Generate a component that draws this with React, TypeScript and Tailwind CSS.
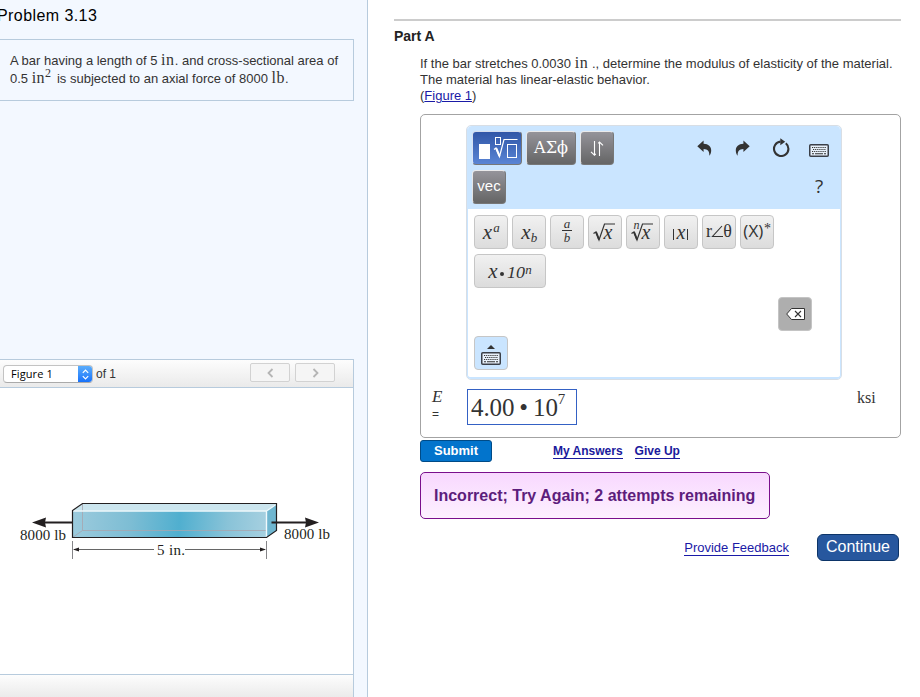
import type { ReactNode } from "react";
import clsx from "clsx";

const serif = "font-['Liberation_Serif',serif]";

// shared svg text setup for the formula keys
const keyText = {
    fontFamily: "'Liberation Serif', serif",
    fontStyle: "italic",
    fill: "#333",
    textAnchor: "middle" as const,
};

interface ButtonProps {
    children: ReactNode;
    wide?: boolean;
}

const ModeButton: React.FC<ButtonProps & { active?: boolean }> = ({ children, wide, active }) => (
    <button
        className={clsx(
            "flex h-[34px] items-center justify-center rounded-[4px] border border-t-white/80 border-r-[#777] border-b-[#777] border-l-white/80 bg-linear-to-b bg-origin-border text-white",
            wide ? "w-[50px]" : "w-[34px]",
            active ? "from-[#2f55a6] to-[#5b86d6]" : "from-[#96959c] to-[#646464]",
        )}
    >
        {children}
    </button>
);

const FormulaKey: React.FC<ButtonProps> = ({ children, wide }) => (
    <button
        className={clsx(
            "h-[34px] rounded-[4px] border border-[#c6c6c6] bg-linear-to-b from-[#f1f1f1] to-[#dcdcdc]",
            wide ? "w-[72px]" : "w-[34px]",
        )}
    >
        <svg viewBox={wide ? "1 1 70 32" : "1 1 32 32"} className="block h-8 w-full">
            {children}
        </svg>
    </button>
);

const KeyboardIcon: React.FC = () => (
    <svg width="20" height="13" viewBox="0 0 20 13" className="block">
        <rect x="0.75" y="0.75" width="18.5" height="11.5" rx="1" fill="#e8f1fb" stroke="#3a3f48" strokeWidth="1.5" />
        <path d="M3 3.5H17M4 5.5H17M3 7.5H17" stroke="#333" strokeWidth="1.1" strokeDasharray="1.2 0.9" />
        <path d="M3 9.7H5M6 9.7H14M15 9.7H17" stroke="#333" strokeWidth="1.1" />
    </svg>
);

const UndoIcon: React.FC<{ flip?: boolean }> = ({ flip }) => (
    <svg width="15" height="16" viewBox="0 0 15 16" className={clsx("block", flip && "-scale-x-100")}>
        <path d="M0.3 6.2 6.6 0.6V3.8C11.5 4 14.2 6.6 14.2 10.6 14.2 12.8 13.5 14.7 12.3 15.8 12.7 11.4 10.8 9 6.6 8.9V12Z" fill="#333" />
    </svg>
);

const Toolbar: React.FC = () => (
    <div className="flex h-[83px] justify-between rounded-t-[4px] bg-[#cae5ff] pt-[5px] pl-[4px]">
        <div className="flex flex-col gap-[5px]">
            <div className="flex gap-1">
                <ModeButton wide active>
                    <svg width="48" height="32" viewBox="0 0 48 32">
                        <rect x="6" y="12" width="11" height="15" fill="white" />
                        <path d="M21 17.5 23 16 26.5 24.5 31 7.5H44.5" fill="none" stroke="white" strokeWidth="1.2" />
                        <path d="M23.3 16.5 26.5 24" stroke="white" strokeWidth="2" />
                        <rect x="22.5" y="5.5" width="5" height="7" fill="none" stroke="white" />
                        <rect x="34.5" y="12.5" width="9" height="13" fill="none" stroke="white" />
                    </svg>
                </ModeButton>
                <ModeButton wide>
                    <svg width="48" height="32" viewBox="0 0 48 32">
                        <text x="24" y="21" textAnchor="middle" textLength="34" lengthAdjust="spacingAndGlyphs" fontSize="17" fontFamily="'DejaVu Serif', serif" fill="white">AΣϕ</text>
                    </svg>
                </ModeButton>
                <ModeButton>
                    <svg width="32" height="32" viewBox="0 0 32 32" fill="none" stroke="white" strokeWidth="1.1">
                        <path d="M13.5 9V23M10 19.8 13.5 23.2 14.8 21.8M18.5 24V10M17.2 11.4 18.5 10 22 13.4" />
                    </svg>
                </ModeButton>
            </div>
            <ModeButton>
                <span className="-mt-[3px] text-[15px]">vec</span>
            </ModeButton>
        </div>
        <div className="flex w-[143px] flex-col pt-[9px] text-[#333]">
            <div className="flex h-[21px] items-start">
                <span className="w-[38px]"><UndoIcon /></span>
                <span className="w-[37px]"><UndoIcon flip /></span>
                <svg width="18" height="19" viewBox="0 0 18 19" className="mr-[19px] -mt-0.5 block">
                    <path d="M13.8 5.2A7.2 7.2 0 1 1 8.5 3.6" fill="none" stroke="#333" strokeWidth="2.1" />
                    <path d="M8.3 0.2 13.2 3.8 8.3 7.2Z" fill="#333" />
                </svg>
                <span className="mt-[4px]"><KeyboardIcon /></span>
            </div>
            <span className="mt-[13px] ml-[118px] font-['Open_Sans',sans-serif] text-[19px] leading-6">?</span>
        </div>
    </div>
);

const FormulaKeys: React.FC = () => (
    <div className="flex flex-col gap-[5px] px-[6px] pt-[6px]">
        <div className="flex gap-1">
            <FormulaKey>
                <text {...keyText} x="13.5" y="23.5" fontSize="21">x</text>
                <text {...keyText} x="22.5" y="16.5" fontSize="13">a</text>
            </FormulaKey>
            <FormulaKey>
                <text {...keyText} x="14" y="23.5" fontSize="21">x</text>
                <text {...keyText} x="22" y="26.5" fontSize="13">b</text>
            </FormulaKey>
            <FormulaKey>
                <text {...keyText} x="17" y="13" fontSize="13">a</text>
                <path d="M12 15.5H22" stroke="#333" />
                <text {...keyText} x="17" y="27" fontSize="13">b</text>
            </FormulaKey>
            <FormulaKey>
                <path d="M5.5 18.5 8 17 11 25 16.5 9H27" fill="none" stroke="#333" strokeWidth="1.2" />
                <path d="M8 17 11 24.5" stroke="#333" strokeWidth="2" />
                <text {...keyText} x="20" y="23.5" fontSize="20">x</text>
            </FormulaKey>
            <FormulaKey>
                <path d="M5.5 18.5 8 17 11 25 16.5 9H27" fill="none" stroke="#333" strokeWidth="1.2" />
                <path d="M8 17 11 24.5" stroke="#333" strokeWidth="2" />
                <text {...keyText} x="20" y="23.5" fontSize="20">x</text>
                <text {...keyText} x="10.5" y="14" fontSize="12">n</text>
            </FormulaKey>
            <FormulaKey>
                <path d="M9.5 14V25M23.5 14V25" stroke="#333" />
                <text {...keyText} x="17" y="23.5" fontSize="20">x</text>
            </FormulaKey>
            <FormulaKey>
                <text {...keyText} fontStyle="normal" x="7" y="22" fontSize="18">r</text>
                <path d="M20 11 10.5 21.5H21" fill="none" stroke="#333" strokeWidth="1.1" />
                <text {...keyText} fontStyle="normal" x="25.5" y="22" fontSize="18">θ</text>
            </FormulaKey>
            <FormulaKey>
                <text {...keyText} fontStyle="normal" x="13.3" y="22" fontSize="17" textLength="20" fontFamily="'Open Sans', sans-serif">(X)</text>
                <text {...keyText} fontStyle="normal" x="27.5" y="18" fontSize="14">*</text>
            </FormulaKey>
        </div>
        <FormulaKey wide>
            <text {...keyText} x="19" y="24" fontSize="21">x</text>
            <circle cx="28" cy="20" r="2" fill="#333" />
            <text {...keyText} x="42" y="24" fontSize="16" textLength="18" lengthAdjust="spacingAndGlyphs">10</text>
            <text {...keyText} x="54.5" y="20" fontSize="13">n</text>
        </FormulaKey>
    </div>
);

const Keypad: React.FC = () => (
    <div className="ml-[45px] h-[255px] w-[376px] rounded-[5px] border border-[#d8dee5]">
        <div className="flex h-full flex-col rounded-[4px] border-x border-b-2 border-[#cae5ff]">
            <Toolbar />
            <FormulaKeys />
            <div className="mt-[9px] mr-[28px] flex justify-end">
                <button className="flex size-[34px] items-center justify-center rounded-[4px] border border-[#c4c4c4] bg-[#aeaeae]">
                    <svg width="19" height="12" viewBox="0 0 19 12">
                        <path d="M5.5 0.5H18.5V11.5H5.5L0.7 6Z" fill="white" stroke="#333" />
                        <path d="M9 3 15 9M15 3 9 9" stroke="#333" strokeWidth="1.1" />
                    </svg>
                </button>
            </div>
            <button className="mt-[5px] ml-[6px] flex size-[34px] flex-col items-center rounded-[4px] border border-[#c6c6c6] bg-[#cae5ff] pt-[8px]">
                <svg width="8" height="4" viewBox="0 0 8 4" className="mb-[3px] block">
                    <path d="M4 0 8 4H0Z" fill="#333" />
                </svg>
                <KeyboardIcon />
            </button>
        </div>
    </div>
);

const BarFigure: React.FC = () => (
    <svg width="353" height="286" viewBox="0 388 353 286" className="block" fontFamily="'Liberation Serif', serif" fontSize="15" fill="#231f20">
        <defs>
            <linearGradient id="front" gradientUnits="userSpaceOnUse" x1="73" y1="518" x2="266" y2="530">
                <stop offset="0" stopColor="#9ccbdd" />
                <stop offset="0.3" stopColor="#7dbdd4" />
                <stop offset="0.55" stopColor="#50afcf" />
                <stop offset="0.8" stopColor="#89c3d8" />
                <stop offset="1" stopColor="#a6d0e0" />
            </linearGradient>
        </defs>
        {/* box faces */}
        <path d="M72.5 510.5 82.5 503.5H276.5L266.5 510.5Z" fill="#cbe5ee" />
        <path d="M266.5 510.5 276.5 503.5V530.5L266.5 537.5Z" fill="#6fb6d0" />
        <rect x="72.5" y="510.5" width="194" height="27" fill="url(#front)" />
        <path d="M82.5 504V530.5H266M72.5 537.5 82.5 530.5" fill="none" stroke="#a7a5ad" strokeWidth="0.8" />
        <path d="M73 511H266.5V537M266.5 511 276 504.5" fill="none" stroke="#eff9fc" strokeWidth="1.4" />
        <path d="M72.5 537.5V510.5L82.5 503.5H276.5V530.5L266.5 537.5Z" fill="none" stroke="#231f20" strokeWidth="1.2" />
        {/* force arrows */}
        <path d="M72 522.5H44M271.5 522.5H307" stroke="#231f20" strokeWidth="2" />
        <path d="M32 522.5 46 517.5 45 522.5 46 527.5ZM319 522.5 305 517.5 306 522.5 305 527.5Z" />
        <text x="20" y="540" textLength="46">8000 lb</text>
        <text x="284" y="539" textLength="46">8000 lb</text>
        {/* dimension line */}
        <path d="M72.5 541V559M266.5 541V559" stroke="#77777a" strokeWidth="0.9" />
        <path d="M74 549.5H154M185 549.5H265" stroke="#555" strokeWidth="0.9" />
        <path d="M73 549.5 79 547.5V551.5ZM266 549.5 260 547.5V551.5Z" />
        <text x="157" y="555" textLength="28">5 in.</text>
    </svg>
);

const FigurePanel: React.FC = () => (
    <div className="mt-[258px] flex w-[354px] flex-1 flex-col border-t border-r border-[#b7cbdd] bg-white">
        <div className="flex h-[28px] items-start border-b border-[#b7cbdd] bg-linear-to-b from-[#fdfdfd] to-[#eaeaea]">
            <button className="mt-[5px] ml-[3px] flex h-[18px] w-[90px] items-center justify-between overflow-hidden rounded-[4px] border border-[#c3c3c3] border-b-[#aaa] bg-white pl-[7px] font-['Open_Sans',sans-serif] text-[11px] tracking-[0.1px] text-black">
                Figure 1
                <span className="-mr-px flex h-[18px] w-[15px] shrink-0 items-center justify-center bg-linear-to-b from-[#5eb0fb] to-[#126dfa]">
                    <svg width="7" height="11" viewBox="0 0 7 11" fill="none" stroke="white" strokeWidth="1.2">
                        <path d="M0.8 3.8 3.5 1 6.2 3.8M0.8 7.2 3.5 10 6.2 7.2" />
                    </svg>
                </span>
            </button>
            <span className="mt-[5px] ml-[3px] text-[12px] leading-[18px] text-[#333]">of 1</span>
            <div className="mt-[3px] mr-[18px] ml-auto flex gap-[5px]">
                {["M6.5 1 2.5 5 6.5 9", "M2.5 1 6.5 5 2.5 9"].map((d) => (
                    <button key={d} className="flex h-[19px] w-[40px] items-center justify-center rounded-[2px] border border-[#d2d2d2] bg-[#f5f5f5]">
                        <svg width="9" height="10" viewBox="0 0 9 10">
                            <path d={d} fill="none" stroke="#b5b5b5" strokeWidth="1.8" />
                        </svg>
                    </button>
                ))}
            </div>
        </div>
        <BarFigure />
        <div className="flex-1 border-t border-[#b7cbdd] bg-linear-to-b from-[#fdfdfd] to-[#ebebeb]" />
    </div>
);

const App: React.FC = () => (
    <div className="flex h-[697px] w-[920px] overflow-hidden bg-white font-['Liberation_Sans',Arial,sans-serif] text-[13px] leading-4 text-[#333]">
        {/* problem statement and figure */}
        <aside className="flex w-[368px] flex-col border-r border-[#b7cbdd] bg-[#f3f8ff]">
            <h1 className="-ml-[3px] h-[39px] pt-[6px] text-[16px] leading-[20px] tracking-[0.42px] text-black">Problem 3.13</h1>
            <div className="h-[62px] w-[354px] border border-l-0 border-[#b7cbdd] pt-[12px] pl-[10px] leading-[18px] whitespace-nowrap">
                <p>
                    A bar having a length of 5 <span className={clsx(serif, "text-[16px] leading-none tracking-[0.6px]")}>in</span>. and cross-sectional area of
                </p>
                <p>
                    0.5 <span className={clsx(serif, "mr-[2px] text-[16px] leading-none tracking-[0.4px]")}>in<sup className="-top-[6px] text-[12px]">2</sup></span>
                    {" "}is subjected to an axial force of 8000 <span className={clsx(serif, "text-[16px] leading-none tracking-[0.5px]")}>lb</span>.
                </p>
            </div>
            <FigurePanel />
        </aside>

        {/* answer area */}
        <main className="ml-[26px] w-[507px] pt-[19px]">
            <div className="h-[2px] bg-[#ccc]" />
            <h2 className="mt-[7px] text-[14px] leading-4 font-bold text-[#222]">Part A</h2>
            <div className="ml-[26px]">
                <p className="mt-[11px] whitespace-nowrap">
                    If the bar stretches 0.0030 <span className={clsx(serif, "text-[16px] leading-none tracking-[0.6px]")}>in</span> ., determine the modulus of elasticity of the material.
                    <br />
                    The material has linear-elastic behavior.
                    <br />
                    (<a className="text-[#1a1aa6] underline">Figure 1</a>)
                </p>
                <div className="mt-[10px] h-[324px] w-[481px] rounded-[5px] border border-[#a3a3a3] pt-[10px]">
                    <Keypad />
                    <div className="mt-[9px] flex">
                        <div className="w-[46px] pl-[11px]">
                            <div className={clsx(serif, "text-[17px] leading-4 italic")}>E</div>
                            <div className="mt-px text-[12px] leading-4">=</div>
                        </div>
                        <div className={clsx(serif, "h-[36px] w-[110px] border border-[#3461c4] pl-[3px] text-[25px] leading-[36px] tracking-[-0.1px] whitespace-nowrap")}>
                            4.00<span className="mx-[5px]">•</span>10<sup className="-top-[12px] text-[15px]">7</sup>
                        </div>
                        <div className={clsx(serif, "ml-auto w-[43px] text-[16px] leading-[17px]")}>ksi</div>
                    </div>
                </div>
                <div className="mt-[2px] flex h-[22px] items-center font-bold text-[#1a1a9c]">
                    <button className="h-[22px] w-[72px] rounded-[3px] border border-[#004b87] bg-[#0274cc] text-white">Submit</button>
                    <a className="ml-[61px] border-b border-[#1a1a9c] text-[12px] leading-[14px]">My Answers</a>
                    <a className="ml-[12px] border-b border-[#1a1a9c] text-[12px] leading-[14px]">Give Up</a>
                </div>
                <div className="mt-[10px] flex h-[47px] w-[350px] items-center rounded-[5px] border border-[#7a0f8c] bg-linear-to-b from-[#f8d8fe] to-[#fdf0ff] pl-[13px] text-[16px] font-bold whitespace-nowrap text-[#5d1d7c]">
                    Incorrect; Try Again; 2 attempts remaining
                </div>
                <div className="mt-[15px] flex items-center justify-end pr-[2px]">
                    <a className="mt-[2px] mr-[28px] border-b border-[#1a1aa6] leading-[14px] text-[#1a1aa6]">Provide Feedback</a>
                    <button className="h-[27px] w-[82px] rounded-[6px] border border-[#0c3468] bg-[#27579e] pb-[2px] text-[16px] leading-none text-white">Continue</button>
                </div>
            </div>
        </main>
    </div>
);

export default App;
